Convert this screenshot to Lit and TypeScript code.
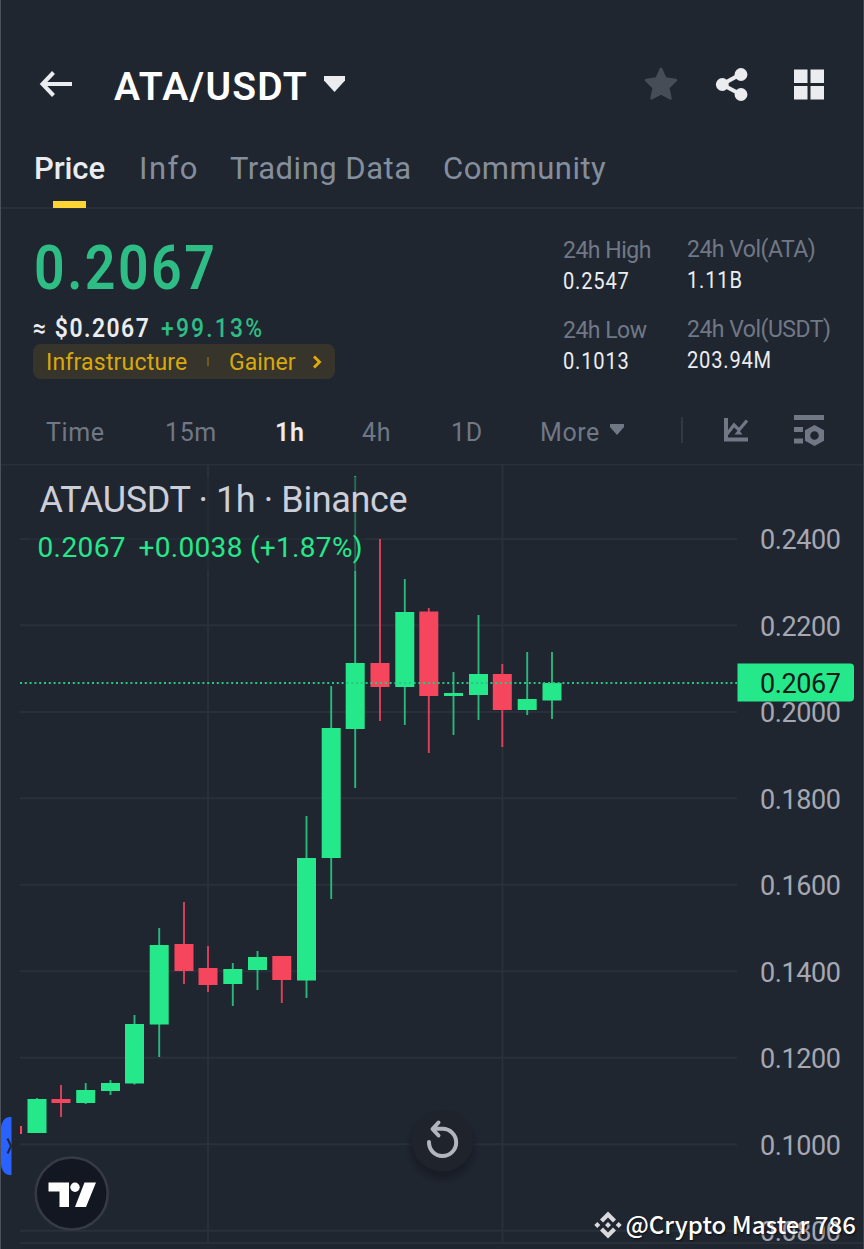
import { LitElement, html, svg, css } from 'lit';
import { customElement } from 'lit/decorators.js';

type Candle = [x: number, high: number, top: number, bottom: number, low: number, up: boolean];

const CANDLES: Candle[] = [
  [37, 1098, 1099, 1133, 1133, true],
  [61, 1085, 1099, 1103, 1117, false],
  [85.7, 1083, 1090, 1103, 1104, true],
  [110.5, 1080, 1083, 1091, 1095, true],
  [134.5, 1015, 1024, 1083.5, 1084.5, true],
  [159.2, 928, 945, 1024.5, 1057, true],
  [184, 902, 944, 971, 984, false],
  [208, 946, 968, 985, 992, false],
  [232.8, 963, 969, 984, 1006, true],
  [257.5, 951, 957, 970, 990, true],
  [281.8, 956, 956, 980, 1003, false],
  [306.5, 816, 858, 980.5, 998, true],
  [331.2, 686, 728, 858, 899, true],
  [355.2, 476, 663, 729, 788, true],
  [380, 539, 663, 687, 721, false],
  [404.8, 579, 612, 687, 725, true],
  [428.8, 608, 611.5, 696, 753, false],
  [453.5, 672, 693, 696, 735, true],
  [478.5, 615, 674, 695, 720, true],
  [502.3, 664, 674, 710, 747, false],
  [527.2, 652, 699, 710, 715, true],
  [552, 652, 683, 700.5, 719, true],
];

const LEVELS: [string, number][] = [
  ['0.2400', 539], ['0.2200', 625.3], ['0.2000', 712], ['0.1800', 798.3], ['0.1600', 884.8],
  ['0.1400', 971.3], ['0.1200', 1057.8], ['0.1000', 1144.3], ['0.0800', 1230.8],
];

@customElement('price-chart')
export class PriceChart extends LitElement {
  static styles = css`
    :host { display: block; position: relative; width: 864px; height: 785px; overflow: hidden; }
    svg { display: block; }
    .grid { stroke: #2a303a; stroke-width: 2; fill: none; }
    .up { fill: #25e88b; }
    .down { fill: #f6465d; }
    .wick-up { stroke: #29b77a; stroke-width: 1.9; }
    .wick-down { stroke: #e0415a; stroke-width: 1.9; }
    .axis { font: 400 27px Roboto, sans-serif; fill: #a5a8b3; }
    .tag { font: 400 27px Roboto, sans-serif; fill: #0e1a17; }
    .last { stroke: #25c985; stroke-width: 2; stroke-dasharray: 2 2.8; }
    .veil { fill: #202630; fill-opacity: 0.5; }
    .name { font: 400 36px Roboto, sans-serif; fill: #ccced8; }
    .quote { font: 400 28px Roboto, sans-serif; fill: #25e88b; }
  `;

  render() {
    return html`<svg width="864" height="785" viewBox="0 464 864 785">
      <defs>
        <radialGradient id="halo"><stop offset=".72" stop-color="#151922" stop-opacity=".75"/><stop offset="1" stop-color="#151922" stop-opacity="0"/></radialGradient>
      </defs>
      <path class="grid" d="M0 464.500H864M208 464V1242M502.500 464V1242M20 1243H864" />
      ${LEVELS.map(([, y]) => svg`<path class="grid" d="M20 ${y}H737" />`)}
      <rect class="down" x="20" y="1126" width="2" height="8" />
      ${CANDLES.map(([x, high, top, bottom, low, up]) => svg`
        <path class=${up ? 'wick-up' : 'wick-down'} d="M${x} ${high}V${low}" />
        <rect class=${up ? 'up' : 'down'} x=${x - 9.5} y=${top} width="19" height=${bottom - top} />`)}
      <path class="last" d="M20 683H737" />
      <rect class="veil" x="29" y="477" width="388" height="46" />
      <rect class="veil" x="29" y="523" width="336" height="48" />
      <text class="name" x="39.500" y="512" textLength="368">ATAUSDT · 1h · Binance</text>
      <text class="quote" x="37.500" y="557" textLength="88">0.2067</text>
      <text class="quote" x="138.500" y="557" textLength="224">+0.0038 (+1.87%)</text>
      ${LEVELS.map(([label, y]) => svg`<text class="axis" x="760" y=${Math.round(y + 10.4)} textLength="81">${label}</text>`)}
      <path fill="#25e88b" d="M737.500 663.500H850a4 4 0 0 1 4 4V697.500a4 4 0 0 1-4 4H737.500z" />
      <text class="tag" x="760" y="692.500" textLength="81">0.2067</text>
      <path fill="#2962ff" d="M11.500 1117H10a9 11 0 0 0-9 11V1164a9 11 0 0 0 9 11h1.500z" />
      <path fill="none" stroke="#202630" stroke-width="2" d="M7.500 1138.500 11 1146 7.500 1153.500" />
      <circle cx="71.700" cy="1193.500" r="36" fill="#131722" stroke="#363a45" stroke-width="2.500" />
      <path fill="#fff" d="M48.500 1182.500H69V1207H59.500V1191.500H48.500zM84.500 1182.500H96L86 1207H75z" />
      <circle cx="75" cy="1187.200" r="4.700" fill="#fff" />
      <circle cx="442.500" cy="1147" r="38" fill="url(#halo)" />
      <circle cx="442.500" cy="1140.500" r="31" fill="#1f232c" />
      <path fill="none" stroke="#b2b5be" stroke-width="4" stroke-linecap="round" stroke-linejoin="round" d="M429 1142a13.600 13.600 0 1 0 13.600-13.200H433M438.500 1122.500 432.500 1129 438.500 1135.500" />
    </svg>`;
  }
}

@customElement('app-root')
export class AppRoot extends LitElement {
  static styles = css`
    :host { display: block; box-sizing: border-box; position: relative; width: 864px; height: 1249px; overflow: hidden; background: #202630; color: #eaecef; font-family: Roboto, sans-serif; white-space: nowrap; }
    * { box-sizing: border-box; }
    svg { display: block; flex: none; }
    .edge { position: absolute; inset: 0; border-left: 1px solid #4c515a; border-right: 1px solid #3c424b; pointer-events: none; }
    header { display: flex; align-items: center; height: 128px; padding: 40px 37px 0 38px; }
    .pair { width: 210px; margin-left: 40px; font-size: 39px; font-weight: 600; letter-spacing: 1.2px; line-height: 48px; padding-top: 5px; color: #fff; }
    .tools { display: flex; margin-left: auto; }
    .tools svg { margin-left: 35px; }
    .tools .apps { margin-left: 41px; }
    nav { display: flex; height: 81px; border-bottom: 2px solid #2a303a; padding: 20px 0 0 34px; font-size: 31px; font-weight: 450; line-height: 42px; color: #848e9c; }
    .tab { letter-spacing: 0.5px; }
    .price-tab { width: 105px; color: #eaecef; font-weight: 500; }
    .price-tab .tab { letter-spacing: -0.1px; }
    .info-tab { width: 91px; letter-spacing: 1.5px; }
    .data-tab { width: 213px; }
    .mark { width: 33px; height: 7px; margin: 11px 0 0 19px; background: #fcd535; }
    .summary { display: flex; justify-content: space-between; height: 191px; padding: 0 32px 0 33px; }
    .last { height: 106px; font-size: 61px; font-weight: 600; line-height: 119px; color: #2ebd85; }
    .narrow { display: inline-block; transform: scaleX(0.88); transform-origin: left; }
    .big { letter-spacing: 2.8px; margin-left: 1px; }
    .fiat { display: flex; height: 29px; line-height: 27px; font-size: 26px; font-weight: 600; }
    .usd { width: 128px; letter-spacing: 1.7px; }
    .gain { color: #2ebd85; letter-spacing: 2.5px; font-weight: 500; }
    .tags { display: flex; align-items: center; width: 302px; height: 35px; border-radius: 8px; background: #37342c; color: #d9a90c; font-size: 23px; line-height: 34px; padding-left: 13px; }
    .tags span { padding-top: 2px; }
    .tags .first { width: 161px; letter-spacing: 0.2px; }
    .tags i { width: 2px; height: 9px; background: #6d5921; margin-right: 20px; }
    .tags .second { width: 84px; }
    .stats { display: grid; grid-template-columns: 124px 145px; grid-template-rows: 80px 80px; padding-top: 26px; font-size: 23px; line-height: 31px; }
    .stats .shift { margin-top: -1px; }
    .label { color: #707886; letter-spacing: -0.5px; }
    .value { letter-spacing: 0.9px; transform: scaleX(0.875); transform-origin: left; font-weight: 450; }
    .frames { display: flex; align-items: center; height: 64px; padding: 0 39px 0 46px; font-size: 25px; color: #707886; letter-spacing: 0.6px; }
    .frames .on { color: #eaecef; font-weight: 600; }
    .w1 { width: 119px; } .w2 { width: 110px; } .w3 { width: 87px; } .w4 { width: 89px; } .w5 { width: 89px; } .w6 { width: 70px; }
    .frames .caret { margin-bottom: 5px; }
    .bar { width: 2px; height: 26px; margin: 0 40px 4px 57px; background: #323843; }
    .indicators { margin-bottom: 4px; }
    .settings { margin: 0 0 4px auto; }
    .credit { position: absolute; right: 8px; bottom: 7px; display: flex; align-items: center; gap: 3px; font: 500 24px/36px "Noto Sans CJK SC", sans-serif; color: #fff; letter-spacing: 0.05px; }
    .credit span { margin-top: -1px; text-shadow: 1px 1px 2px #000a; }
  `;

  render() {
    return html`
      <header>
        <svg width="36" height="32" viewBox="0 0 36 32" fill="none" stroke="#eaecef" stroke-width="4"><path d="M34 16H5M15.500 4.500 4.500 16 15.500 27.500" /></svg>
        <span class="pair">ATA/USDT</span>
        <svg width="21" height="16" viewBox="0 0 21 16" fill="#eaecef"><path d="M0 0H21V4.500L10.500 16 0 4.500z" /></svg>
        <div class="tools">
          <svg width="36" height="36" viewBox="0 0 36 36" fill="#474d57" stroke="#474d57" stroke-width="2.500" stroke-linejoin="round"><path d="M18 2.800 22.400 12.600 33 14 25.300 21.500 27.500 32.500 18 27.400 8.500 32.500 10.700 21.500 3 14 13.600 12.600z" /></svg>
          <svg width="36" height="36" viewBox="0 0 36 36" fill="#eaecef"><path d="M27 8 8 18.500 27 28.500" fill="none" stroke="#eaecef" stroke-width="4" /><circle cx="27" cy="8.500" r="6.400" /><circle cx="8.300" cy="18.500" r="6.400" /><circle cx="27" cy="28.500" r="6.400" /></svg>
          <svg class="apps" width="36" height="36" viewBox="0 0 36 36" fill="#eaecef"><path d="M3 3.500H16.500V17H3zM19.500 3.500H33V17H19.500zM3 20H16.500V33.500H3zM19.500 20H33V33.500H19.500z" /></svg>
        </div>
      </header>
      <nav>
        <div class="price-tab"><span class="tab">Price</span><div class="mark"></div></div>
        <div class="tab info-tab">Info</div>
        <div class="tab data-tab">Trading Data</div>
        <div class="tab">Community</div>
      </nav>
      <section class="summary">
        <div>
          <div class="last"><span class="narrow big">0.2067</span></div>
          <div class="fiat"><span class="usd narrow">≈ $0.2067</span><span class="gain narrow">+99.13%</span></div>
          <div class="tags"><span class="first">Infrastructure</span><i></i><span class="second">Gainer</span>
            <svg width="9" height="14" viewBox="0 0 9 14" fill="none" stroke="#e0ad0a" stroke-width="2.800"><path d="M1 1.500 6.500 7 1 12.500" /></svg>
          </div>
        </div>
        <div class="stats">
          <div><div class="label">24h High</div><div class="value">0.2547</div></div>
          <div class="shift"><div class="label">24h Vol(ATA)</div><div class="value">1.11B</div></div>
          <div><div class="label">24h Low</div><div class="value">0.1013</div></div>
          <div class="shift"><div class="label">24h Vol(USDT)</div><div class="value">203.94M</div></div>
        </div>
      </section>
      <section class="frames">
        <span class="w1">Time</span><span class="w2">15m</span><span class="w3 on">1h</span><span class="w4">4h</span><span class="w5">1D</span><span class="w6">More</span>
        <svg class="caret" width="14" height="11" viewBox="0 0 14 11" fill="#707886"><path d="M0 0H14V3L7 11 0 3z" /></svg>
        <span class="bar"></span>
        <svg class="indicators" width="26" height="26" viewBox="0 0 26 26" fill="none" stroke="#707886" stroke-width="4"><path d="M3 1V22.500H25" /><path stroke-width="3.200" d="M4 17 11 8 16 13 24 3.500" /><path fill="#707886" stroke="none" d="M11.500 17.500 15.500 12.500 19.500 17.500z" /></svg>
        <svg class="settings" width="32" height="32" viewBox="0 0 32 32" fill="#707886"><path d="M1 1H31V6H1zM1 13H10V18H1zM1 24.500H10V29.500H1z" /><path fill-rule="evenodd" d="M21.500 11 31 16.200V26.800L21.500 32 12 26.800V16.200zM21.500 17.200a4.300 4.300 0 1 0 0 8.600 4.300 4.300 0 0 0 0-8.600z" /></svg>
      </section>
      <price-chart></price-chart>
      <div class="credit">
        <svg width="28" height="28" viewBox="0 0 28 28" fill="#d9dadd"><path d="M14 0.500 22 8.500 19 11.500 14 6.500 9 11.500 6 8.500zM14 27.500 22 19.500 19 16.500 14 21.500 9 16.500 6 19.500zM14 11 17 14 14 17 11 14zM3.300 11 6.300 14 3.300 17 .3 14zM24.700 11 27.700 14 24.700 17 21.700 14z" /></svg>
        <span>@Crypto Master 786</span>
      </div>
      <div class="edge"></div>
    `;
  }
}
